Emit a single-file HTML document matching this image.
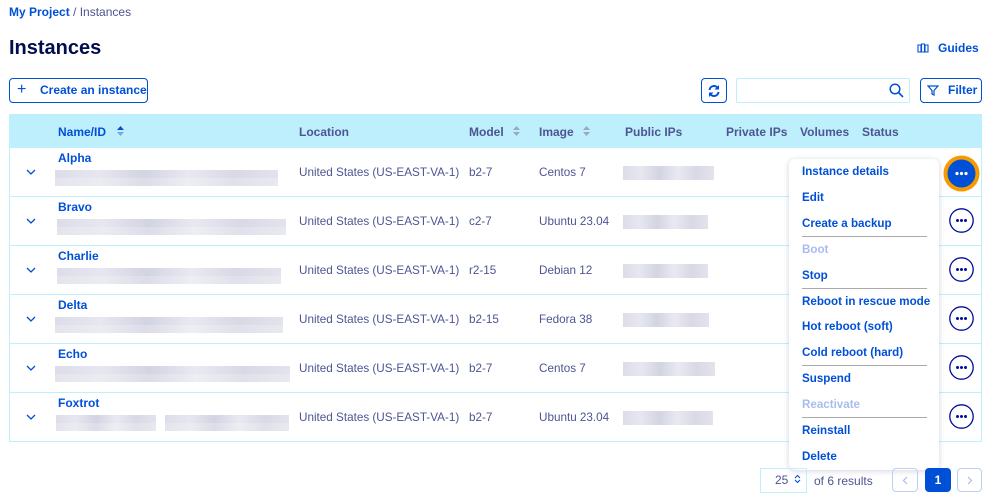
<!DOCTYPE html>
<html><head><style>
*{box-sizing:border-box;margin:0;padding:0}
body{width:992px;height:504px;background:#fff;font-family:"Liberation Sans",sans-serif;position:relative;overflow:hidden;color:#4d5592}
.a{position:absolute;white-space:nowrap}
.b{font-weight:bold}
.blue{color:#0050d7}
.blur{position:absolute;height:8px;background:linear-gradient(90deg,#dcdde8,#e6e7ef 20%,#d3d4e2 40%,#e9e9f1 60%,#d8d9e5 80%,#e2e3ec)}
.hdr{font-size:12px;font-weight:bold;color:#4d5592;top:125px}
.cell{font-size:11.7px;color:#4d5592}
.dots{position:absolute;left:949px;width:25px;height:25px}
.chev{position:absolute;left:26px}
.mi{position:absolute;left:802px;font-size:11.6px;font-weight:bold;color:#0050d7}
.hr{position:absolute;left:802px;width:125px;height:1px;background:#aaa}
</style></head><body>
<div class="a" style="left:9px;top:5px;font-size:12px"><span class="b blue">My Project</span> <span style="color:#4d5592">/ Instances</span></div>
<div class="a b" style="left:9px;top:37px;font-size:20px;color:#000e4e">Instances</div>
<div class="a b blue" style="left:917px;top:41px;font-size:12px"><svg width="12" height="10" viewBox="0 0 12 10" style="margin-right:9px;vertical-align:-1px"><path d="M1 2h3v7H1zM4.5 1h3v8h-3zM8 2h3v7H8z" fill="none" stroke="#0050d7" stroke-width="1.1"/></svg>Guides</div>
<div class="a" style="left:9px;top:78px;width:139px;height:25px;border:1px solid #0050d7;border-radius:4px;font-size:12px;line-height:23px"><span style="position:absolute;left:7px;font-size:16px;color:#0050d7;top:-1px">+</span><span class="b blue" style="position:absolute;left:30px">Create an instance</span></div>
<div class="a" style="left:701px;top:78px;width:26px;height:25px;border:1px solid #0050d7;border-radius:4px">
<svg style="position:absolute;left:5px;top:5px" width="14" height="14" viewBox="0 0 14 14"><path d="M2.5 6A4.5 4.5 0 0 1 11 4.5M11.5 8A4.5 4.5 0 0 1 3 9.5" fill="none" stroke="#0050d7" stroke-width="2"/><path d="M12 1v4.5H7.5zM2 13V8.5h4.5z" fill="#0050d7"/></svg></div>
<div class="a" style="left:736px;top:78px;width:174px;height:25px;border:1px solid #bdf0fc;border-radius:2px">
<svg style="position:absolute;right:5px;top:4px" width="15" height="15" viewBox="0 0 15 15"><circle cx="6" cy="6" r="4.8" fill="none" stroke="#0050d7" stroke-width="1.5"/><path d="M9.5 9.5L14 14" stroke="#0050d7" stroke-width="1.6"/></svg></div>
<div class="a" style="left:920px;top:78px;width:62px;height:25px;border:1px solid #0050d7;border-radius:4px;font-size:12px;line-height:23px">
<svg style="position:absolute;left:6px;top:6px" width="12" height="11" viewBox="0 0 12 11"><path d="M1 1H11L7 5.5V10L5 9V5.5Z" fill="none" stroke="#0050d7" stroke-width="1.2"/></svg><span class="b blue" style="position:absolute;left:27px">Filter</span></div>

<div class="a" style="left:9px;top:114px;width:973px;height:328px;border:1px solid #bdf0fc"></div>
<div class="a" style="left:9px;top:114px;width:973px;height:34px;background:#bdf0fc"></div>
<div class="a hdr blue" style="left:58px;color:#0050d7">Name/ID <svg width="7" height="10" viewBox="0 0 7 10" style="margin-left:8px"><path d="M0 4L3.5 0L7 4z" fill="#0050d7"/><path d="M0 6L3.5 10L7 6z" fill="#7aa3e8"/></svg></div>
<div class="a hdr" style="left:299px">Location</div>
<div class="a hdr" style="left:469px">Model <svg width="7" height="10" viewBox="0 0 7 10" style="margin-left:6px"><path d="M0 4L3.5 0L7 4zM0 6L3.5 10L7 6z" fill="#9ab"/></svg></div>
<div class="a hdr" style="left:539px">Image <svg width="7" height="10" viewBox="0 0 7 10" style="margin-left:6px"><path d="M0 4L3.5 0L7 4zM0 6L3.5 10L7 6z" fill="#9ab"/></svg></div>
<div class="a hdr" style="left:625px">Public IPs</div>
<div class="a hdr" style="left:726px">Private IPs</div>
<div class="a hdr" style="left:800px">Volumes</div>
<div class="a hdr" style="left:862px">Status</div>

<!-- Row 1 -->
<div class="a b blue" style="left:58px;top:151px;font-size:12px">Alpha</div>
<svg class="chev" style="top:169px" width="10" height="6" viewBox="0 0 10 6"><path d="M1 1L5 5L9 1" fill="none" stroke="#0050d7" stroke-width="1.3"/></svg>
<div class="blur" style="left:55px;top:170px;width:223px"></div><div class="blur" style="left:55px;top:178px;width:223px;opacity:.8"></div>
<div class="a cell" style="left:299px;top:166px">United States (US-EAST-VA-1)</div>
<div class="a cell" style="left:469px;top:166px">b2-7</div>
<div class="a cell" style="left:539px;top:166px">Centos 7</div>
<div class="blur" style="left:623px;top:166px;width:91px;height:14px"></div>
<div class="a" style="left:9px;top:196px;width:973px;height:1px;background:#bdf0fc"></div>
<!-- Row 2 -->
<div class="a b blue" style="left:58px;top:200px;font-size:12px">Bravo</div>
<svg class="chev" style="top:218px" width="10" height="6" viewBox="0 0 10 6"><path d="M1 1L5 5L9 1" fill="none" stroke="#0050d7" stroke-width="1.3"/></svg>
<div class="blur" style="left:57px;top:219px;width:229px"></div><div class="blur" style="left:57px;top:227px;width:229px;opacity:.8"></div>
<div class="a cell" style="left:299px;top:215px">United States (US-EAST-VA-1)</div>
<div class="a cell" style="left:469px;top:215px">c2-7</div>
<div class="a cell" style="left:539px;top:215px">Ubuntu 23.04</div>
<div class="blur" style="left:623px;top:215px;width:85px;height:14px"></div>
<div class="a" style="left:9px;top:245px;width:973px;height:1px;background:#bdf0fc"></div>
<!-- Row 3 -->
<div class="a b blue" style="left:58px;top:249px;font-size:12px">Charlie</div>
<svg class="chev" style="top:267px" width="10" height="6" viewBox="0 0 10 6"><path d="M1 1L5 5L9 1" fill="none" stroke="#0050d7" stroke-width="1.3"/></svg>
<div class="blur" style="left:57px;top:268px;width:224px"></div><div class="blur" style="left:57px;top:276px;width:224px;opacity:.8"></div>
<div class="a cell" style="left:299px;top:264px">United States (US-EAST-VA-1)</div>
<div class="a cell" style="left:469px;top:264px">r2-15</div>
<div class="a cell" style="left:539px;top:264px">Debian 12</div>
<div class="blur" style="left:623px;top:264px;width:85px;height:14px"></div>
<div class="a" style="left:9px;top:294px;width:973px;height:1px;background:#bdf0fc"></div>
<!-- Row 4 -->
<div class="a b blue" style="left:58px;top:298px;font-size:12px">Delta</div>
<svg class="chev" style="top:316px" width="10" height="6" viewBox="0 0 10 6"><path d="M1 1L5 5L9 1" fill="none" stroke="#0050d7" stroke-width="1.3"/></svg>
<div class="blur" style="left:55px;top:317px;width:228px"></div><div class="blur" style="left:55px;top:325px;width:228px;opacity:.8"></div>
<div class="a cell" style="left:299px;top:313px">United States (US-EAST-VA-1)</div>
<div class="a cell" style="left:469px;top:313px">b2-15</div>
<div class="a cell" style="left:539px;top:313px">Fedora 38</div>
<div class="blur" style="left:623px;top:313px;width:86px;height:14px"></div>
<div class="a" style="left:9px;top:343px;width:973px;height:1px;background:#bdf0fc"></div>
<!-- Row 5 -->
<div class="a b blue" style="left:58px;top:347px;font-size:12px">Echo</div>
<svg class="chev" style="top:365px" width="10" height="6" viewBox="0 0 10 6"><path d="M1 1L5 5L9 1" fill="none" stroke="#0050d7" stroke-width="1.3"/></svg>
<div class="blur" style="left:55px;top:366px;width:235px"></div><div class="blur" style="left:55px;top:374px;width:235px;opacity:.8"></div>
<div class="a cell" style="left:299px;top:362px">United States (US-EAST-VA-1)</div>
<div class="a cell" style="left:469px;top:362px">b2-7</div>
<div class="a cell" style="left:539px;top:362px">Centos 7</div>
<div class="blur" style="left:623px;top:362px;width:92px;height:14px"></div>
<div class="a" style="left:9px;top:392px;width:973px;height:1px;background:#bdf0fc"></div>
<!-- Row 6 -->
<div class="a b blue" style="left:58px;top:396px;font-size:12px">Foxtrot</div>
<svg class="chev" style="top:414px" width="10" height="6" viewBox="0 0 10 6"><path d="M1 1L5 5L9 1" fill="none" stroke="#0050d7" stroke-width="1.3"/></svg>
<div class="blur" style="left:56px;top:415px;width:100px"></div><div class="blur" style="left:56px;top:423px;width:100px;opacity:.8"></div>
<div class="blur" style="left:165px;top:415px;width:124px"></div><div class="blur" style="left:165px;top:423px;width:124px;opacity:.8"></div>
<div class="a cell" style="left:299px;top:411px">United States (US-EAST-VA-1)</div>
<div class="a cell" style="left:469px;top:411px">b2-7</div>
<div class="a cell" style="left:539px;top:411px">Ubuntu 23.04</div>
<div class="blur" style="left:623px;top:411px;width:90px;height:14px"></div>

<!-- action buttons -->
<svg class="dots" style="left:943px;top:155px;width:37px;height:37px" viewBox="0 0 37 37"><circle cx="18.5" cy="18.5" r="16" fill="#0050d7" stroke="#f59b00" stroke-width="4"/><circle cx="14" cy="18.5" r="1.6" fill="#fff"/><circle cx="18.5" cy="18.5" r="1.6" fill="#fff"/><circle cx="23" cy="18.5" r="1.6" fill="#fff"/></svg>
<svg class="dots" style="top:208px" viewBox="0 0 25 25"><circle cx="12.5" cy="12.5" r="11.7" fill="#fff" stroke="#000e9c" stroke-width="1.3"/><circle cx="8.5" cy="12.5" r="1.5" fill="#000e9c"/><circle cx="12.5" cy="12.5" r="1.5" fill="#000e9c"/><circle cx="16.5" cy="12.5" r="1.5" fill="#000e9c"/></svg>
<svg class="dots" style="top:257px" viewBox="0 0 25 25"><circle cx="12.5" cy="12.5" r="11.7" fill="#fff" stroke="#000e9c" stroke-width="1.3"/><circle cx="8.5" cy="12.5" r="1.5" fill="#000e9c"/><circle cx="12.5" cy="12.5" r="1.5" fill="#000e9c"/><circle cx="16.5" cy="12.5" r="1.5" fill="#000e9c"/></svg>
<svg class="dots" style="top:306px" viewBox="0 0 25 25"><circle cx="12.5" cy="12.5" r="11.7" fill="#fff" stroke="#000e9c" stroke-width="1.3"/><circle cx="8.5" cy="12.5" r="1.5" fill="#000e9c"/><circle cx="12.5" cy="12.5" r="1.5" fill="#000e9c"/><circle cx="16.5" cy="12.5" r="1.5" fill="#000e9c"/></svg>
<svg class="dots" style="top:355px" viewBox="0 0 25 25"><circle cx="12.5" cy="12.5" r="11.7" fill="#fff" stroke="#000e9c" stroke-width="1.3"/><circle cx="8.5" cy="12.5" r="1.5" fill="#000e9c"/><circle cx="12.5" cy="12.5" r="1.5" fill="#000e9c"/><circle cx="16.5" cy="12.5" r="1.5" fill="#000e9c"/></svg>
<svg class="dots" style="top:404px" viewBox="0 0 25 25"><circle cx="12.5" cy="12.5" r="11.7" fill="#fff" stroke="#000e9c" stroke-width="1.3"/><circle cx="8.5" cy="12.5" r="1.5" fill="#000e9c"/><circle cx="12.5" cy="12.5" r="1.5" fill="#000e9c"/><circle cx="16.5" cy="12.5" r="1.5" fill="#000e9c"/></svg>

<!-- menu -->
<div class="a" style="left:789px;top:159px;width:150px;height:311px;background:#fff;border-radius:6px;box-shadow:0 1px 6px rgba(0,14,78,.18)"></div>
<div class="mi" style="top:165px">Instance details</div>
<div class="mi" style="top:191px">Edit</div>
<div class="mi" style="top:217px">Create a backup</div>
<div class="hr" style="top:236px"></div>
<div class="mi" style="top:243px;color:#a7bdf0">Boot</div>
<div class="mi" style="top:269px">Stop</div>
<div class="hr" style="top:288px"></div>
<div class="mi" style="top:295px">Reboot in rescue mode</div>
<div class="mi" style="top:320px">Hot reboot (soft)</div>
<div class="mi" style="top:346px">Cold reboot (hard)</div>
<div class="hr" style="top:365px"></div>
<div class="mi" style="top:372px">Suspend</div>
<div class="mi" style="top:398px;color:#a7bdf0">Reactivate</div>
<div class="hr" style="top:417px"></div>
<div class="mi" style="top:424px">Reinstall</div>
<div class="mi" style="top:450px">Delete</div>

<!-- pagination -->
<div class="a" style="left:760px;top:468px;width:47px;height:25px;border:1px solid #bdf0fc;font-size:12px;line-height:23px;padding-left:14px">25 <svg width="7" height="10" viewBox="0 0 7 10" style="margin-left:2px"><path d="M1 4L3.5 1.5L6 4M1 6L3.5 8.5L6 6" fill="none" stroke="#0050d7" stroke-width="1.1"/></svg></div>
<div class="a cell" style="left:814px;top:474px;font-size:12px">of 6 results</div>
<div class="a" style="left:892px;top:468px;width:26px;height:24px;border:1px solid #bcd0f4;border-radius:4px"><svg style="position:absolute;left:9px;top:7px" width="6" height="9" viewBox="0 0 6 9"><path d="M5 1L1.5 4.5L5 8" fill="none" stroke="#a7bdf0" stroke-width="1.2"/></svg></div>
<div class="a b" style="left:925px;top:468px;width:26px;height:24px;background:#0050d7;border-radius:4px;text-align:center;line-height:24px;color:#fff;font-size:12px">1</div>
<div class="a" style="left:957px;top:468px;width:25px;height:24px;border:1px solid #bcd0f4;border-radius:4px"><svg style="position:absolute;left:9px;top:7px" width="6" height="9" viewBox="0 0 6 9"><path d="M1 1L4.5 4.5L1 8" fill="none" stroke="#a7bdf0" stroke-width="1.2"/></svg></div>
</body></html>
